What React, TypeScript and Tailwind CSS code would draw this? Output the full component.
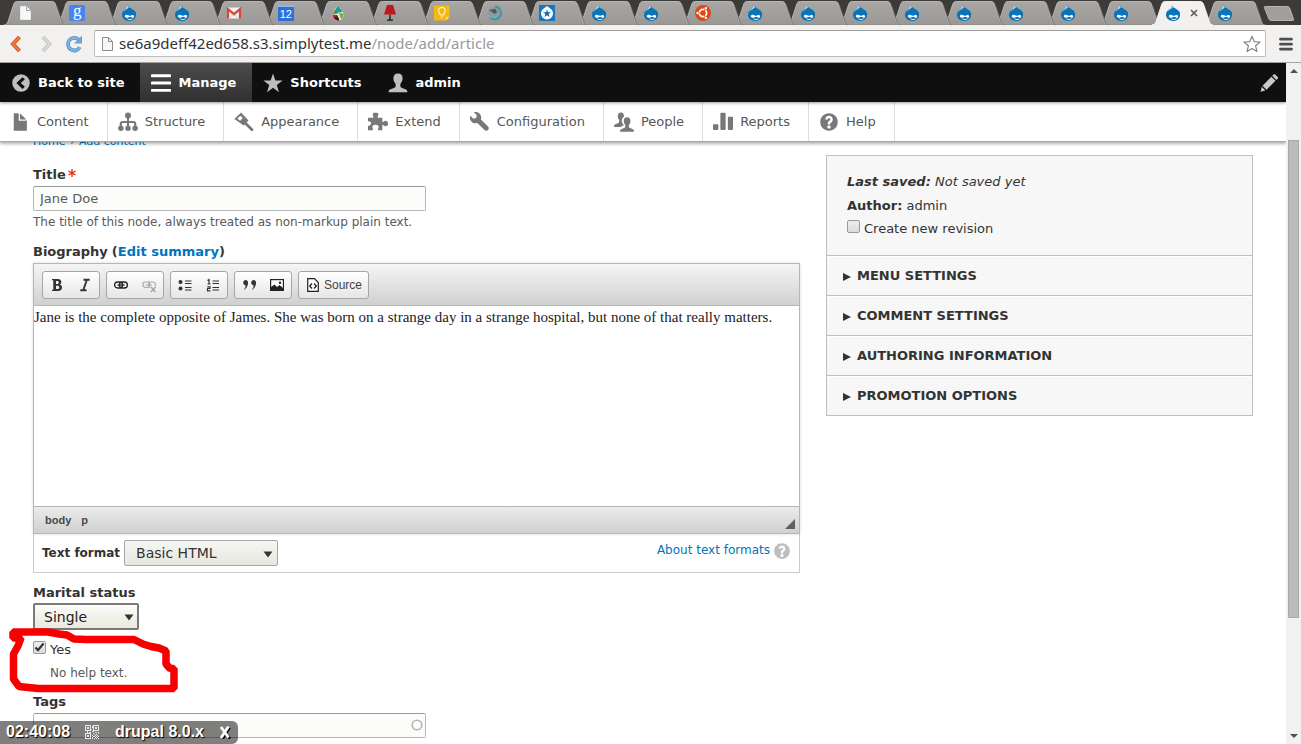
import React from 'react';

/* ---------- Favicons ---------- */

function Druplicon() {
  return (
    <svg viewBox="0 0 16 16" className="size-4" aria-hidden="true">
      <path d="M6.600.3C7.600 2 9 2.700 10.800 3.700C13.500 5.200 15 7.200 15 9.900C15 13.500 12 15.900 8.200 15.900S1 13.500 1 9.700C1 6.800 2.700 5.200 4.500 4C6 3 6.700 2 6.600.3Z" fill="#0b73b8" />
      <path d="M6.600.3C7 1.200 7.400 1.800 8 2.300C6.800 3.900 4.500 4.500 2.600 6.800C3 5 5.800 4 6.600.3Z" fill="#b9dcf2" />
      <path d="M12.800 5.100C14.500 6.600 15.200 8.500 14.900 10.700C14.500 8.600 13.800 7 12.800 5.100Z" fill="#0a568c" />
      <path d="M4.900 9.800C6.500 9.400 7.500 10.600 8.800 10.800C10 10.600 10.800 9.600 12.200 10C13.600 10.600 13.400 12.800 12.200 12.800C11 12.800 10.200 11.700 9.200 11.700C8 11.700 7.200 12.900 5.500 12.800C3.500 12.600 3.300 10.400 4.900 9.800Z" fill="#fff" />
      <path d="M6.500 13.800C8 14.900 10.200 14.800 11.400 13.700" fill="none" stroke="#fff" strokeWidth=".9" />
    </svg>
  );
}

function PageIcon({ light = false }: { light?: boolean }) {
  return (
    <svg viewBox="0 0 16 16" className="size-4" aria-hidden="true">
      <path d="M3.500 1.500H9.500L13.500 5.500V14.500H3.500Z" fill="#f7f7f7" stroke={light ? '#e9e9e9' : '#8c8c8c'} />
      <path d="M9.500 1.500V5.500H13.500" fill="none" stroke={light ? '#9c9c9c' : '#8c8c8c'} />
    </svg>
  );
}

function Gmail() {
  return (
    <svg viewBox="0 0 16 16" className="size-4" aria-hidden="true">
      <rect x="1" y="2.500" width="14" height="11" rx="1" fill="#f4f1f0" />
      <path d="M2 13.500V4.200L8 9.200L14 4.200V13.500" fill="none" stroke="#d8453a" strokeWidth="2.200" />
      <path d="M3.500 13L7 9.500M12.500 13L9 9.500" stroke="#c9c5c4" strokeWidth=".8" />
    </svg>
  );
}

function Parrot() {
  return (
    <svg viewBox="0 0 16 16" className="size-4" aria-hidden="true">
      <path d="M8 .5C11 4 13.500 7 13.500 10.200A5.500 5.500 0 0 1 2.500 10.200C2.500 7 5 4 8 .5Z" fill="#f3efe4" />
      <path d="M8 .5C10 3 11.600 5 12.500 7L6.500 8L5 5C6 3.500 7 2 8 .5Z" fill="#1d9c9a" />
      <path d="M5.200 4.800L8.300 8.500L3 9C3 7.500 4.200 6 5.200 4.800Z" fill="#3b9b3b" />
      <path d="M9 8L13.300 8.500C13.500 11 12.500 13 11 14.500Z" fill="#67b52f" />
      <path d="M2.500 9.500L7.500 10L9 15.500C5 15.800 2.500 13 2.500 9.500Z" fill="#c1272d" />
      <path d="M4 12L8 11.500L9.500 15.400C7 16 5 14.500 4 12Z" fill="#2a2422" />
    </svg>
  );
}

function Lamp() {
  return (
    <svg viewBox="0 0 16 16" className="size-4" aria-hidden="true">
      <path d="M5 0H11L14 9.500H2Z" fill="#c3161c" />
      <path d="M7.300 9.500H8.700V14.500H11V15.800H5V14.500H7.300Z" fill="#1d1d1d" />
    </svg>
  );
}

function Keep() {
  return (
    <svg viewBox="0 0 16 16" className="size-4" aria-hidden="true">
      <path d="M0 .5H15.500V12L12 15.500H0Z" fill="#f5b912" />
      <path d="M12 15.500V12H15.500Z" fill="#fbe08e" />
      <path d="M6.300 10C6.300 8.500 4.600 8 4.600 5.800A3.300 3.300 0 0 1 11.200 5.800C11.200 8 9.500 8.500 9.500 10ZM6.500 12H9.300" fill="none" stroke="#fff3cf" strokeWidth="1.200" />
    </svg>
  );
}

function Swirl() {
  return (
    <svg viewBox="0 0 16 16" className="size-4" aria-hidden="true">
      <circle cx="8" cy="8" r="6.500" fill="#8c989a" />
      <path d="M8 1.500A6.500 6.500 0 1 1 3 12.500" fill="none" stroke="#3d98a6" strokeWidth="1.800" />
      <path d="M1.500 5L8.500 4L10 7.500L7 9L5.500 7Z" fill="#4b575d" />
      <path d="M3 11C5 12.500 9 13 11 9.500" fill="none" stroke="#6fb4be" strokeWidth="1.300" />
    </svg>
  );
}

function StarDrop() {
  return (
    <svg viewBox="0 0 16 16" className="size-4" aria-hidden="true">
      <rect width="16" height="16" fill="#1577c2" />
      <path d="M8 1L12.500 4.500A6 6 0 1 1 3.500 4.500Z" fill="#fff" />
      <path d="M8 4.500L9 7.200H12L9.700 9L10.500 12L8 10.200L5.500 12L6.300 9L4 7.200H7Z" fill="#1468ab" />
    </svg>
  );
}

function Ubuntu() {
  return (
    <svg viewBox="0 0 16 16" className="size-4" aria-hidden="true">
      <circle cx="8" cy="8" r="8" fill="#dd4814" />
      <circle cx="8" cy="8" r="3.600" fill="none" stroke="#fff" strokeWidth="1.800" />
      <path d="M8 8L1.500 8M8 8L11.500 2M8 8L11.500 14" stroke="#dd4814" strokeWidth="1" />
      <circle cx="2.500" cy="8" r="1.200" fill="#fff" />
      <circle cx="10.900" cy="3.100" r="1.200" fill="#fff" />
      <circle cx="10.900" cy="12.900" r="1.200" fill="#fff" />
    </svg>
  );
}

function Google() {
  return (
    <span className="flex size-4 items-center justify-center rounded-xs bg-[#4684f0] pb-1 font-['Liberation_Serif',serif] text-[17px] leading-4 text-white">g</span>
  );
}

function Calendar() {
  return (
    <span className="flex size-4 items-center justify-center border-t-2 border-[#8eb4f5] bg-[#2f6fd8] font-['Liberation_Sans',sans-serif] text-[11px] leading-3 text-white">12</span>
  );
}

const drupal = <Druplicon />;
const tabs: React.ReactNode[] = [
  <PageIcon light />, <Google />, drupal, drupal, <Gmail />, <Calendar />, <Parrot />, <Lamp />,
  <Keep />, <Swirl />, <StarDrop />, drupal, drupal, <Ubuntu />, drupal, drupal,
  drupal, drupal, drupal, drupal, drupal, drupal, drupal, drupal,
];
const ACTIVE_TAB = 22;

function BrowserTab({ icon, active, order }: { icon: React.ReactNode; active: boolean; order: number }) {
  return (
    <div className="relative h-6 min-w-0 flex-1" style={{ zIndex: active ? tabs.length + 1 : order }}>
      <svg viewBox="0 0 62 24" className="absolute left-0 top-0 h-6 w-[62px]" aria-hidden="true">
        <path
          d="M0 24C3 23.500 3.500 22 4.200 20L9.500 4C10.300 1.500 11 .5 13.500 .5H47.500C50 .5 51 1.500 51.800 4L57.200 20C58 22.500 58.500 23.500 61 24Z"
          fill={active ? '#f2f1f0' : 'url(#tab-fill)'}
          stroke={active ? '#f2f1f0' : '#b7b6b3'}
          strokeWidth="1"
        />
        {!active && <path d="M52.500 4.500L57.800 20C58.500 22.500 59 23.500 61 24M0 24H61" fill="none" stroke="#6d6c68" strokeWidth=".8" />}
      </svg>
      <div className="relative flex h-6 items-center gap-[9px] pl-[13px]">
        <span className="shrink-0">{icon}</span>
        {active && (
          <button type="button" aria-label="Close tab" className="shrink-0">
            <svg viewBox="0 0 8 8" className="size-2" aria-hidden="true">
              <path d="M1 1L7 7M7 1L1 7" stroke="#5a5a5a" strokeWidth="1.600" />
            </svg>
          </button>
        )}
      </div>
    </div>
  );
}

function BrowserChrome() {
  return (
    <header className="shrink-0">
      <div className="flex h-[25px] bg-[#3c3b37] pl-1 pt-px">
        <svg className="absolute size-0" aria-hidden="true">
          <defs>
            <linearGradient id="tab-fill" x1="0" x2="0" y1="0" y2="1">
              <stop offset="0" stopColor="#a8a7a5" />
              <stop offset="1" stopColor="#999896" />
            </linearGradient>
          </defs>
        </svg>
        <div className="isolate flex min-w-0 flex-1">
          {tabs.map((icon, i) => (
            <BrowserTab key={i} icon={icon} active={i === ACTIVE_TAB} order={tabs.length - i} />
          ))}
        </div>
        <button type="button" aria-label="New tab" className="mt-1 h-4 w-[45px] pl-[7px]">
          <svg viewBox="0 0 32 15" className="h-[15px] w-8" aria-hidden="true">
            <path d="M2.500.5H23.500C26 .5 26.500 1.500 27 3L30.500 13C31 14.300 30.500 14.500 29.500 14.500H9C6.500 14.500 6 13.500 5.500 12L1.500 2C1 .8 1.500.5 2.500.5Z" fill="#a09f9c" stroke="#b7b6b3" />
          </svg>
        </button>
      </div>
      <div className="flex h-[38px] items-center border-b border-[#a3a3a3] bg-[#f2f1f0] px-2">
        <button type="button" aria-label="Back" className="mr-3">
          <svg viewBox="0 0 16 20" className="h-5 w-4" aria-hidden="true">
            <path d="M11.500 3L5 10L11.500 17" fill="none" stroke="#c9501f" strokeWidth="4" />
            <path d="M11.500 3L5 10L11.500 17" fill="none" stroke="#ef7a3c" strokeWidth="2.400" />
          </svg>
        </button>
        <button type="button" aria-label="Forward" className="mr-3">
          <svg viewBox="0 0 16 20" className="h-5 w-4" aria-hidden="true">
            <path d="M7 3L13.500 10L7 17" fill="none" stroke="#bdbdbd" strokeWidth="3.600" />
            <path d="M7 3L13.500 10L7 17" fill="none" stroke="#d9d9d9" strokeWidth="2.200" />
          </svg>
        </button>
        <button type="button" aria-label="Reload" className="mr-2.5">
          <svg viewBox="0 0 20 20" className="size-5" aria-hidden="true">
            <path d="M15.800 13.200A6.300 6.300 0 1 1 14.500 5.500" fill="none" stroke="#5b93c9" strokeWidth="3.800" />
            <path d="M15.800 13.200A6.300 6.300 0 1 1 14.500 5.500" fill="none" stroke="#84b3e0" strokeWidth="2" />
            <path d="M18 1.500V9.500H10Z" fill="#6ea2d6" />
          </svg>
        </button>
        <div className="flex h-[27px] min-w-0 flex-1 items-center rounded-xs border border-[#bdbcbb] border-t-[#9f9e9d] bg-white px-1">
          <PageIcon />
          <a href="#address" aria-label="Page address" className="ml-1 min-w-0 flex-1 truncate pb-0.5 font-['Noto_Sans',sans-serif] text-[15px] leading-[22px] text-[#333]">
            se6a9deff42ed658.s3.simplytest.me<span className="text-[#999]">/node/add/article</span>
          </a>
          <button type="button" aria-label="Bookmark this page">
            <svg viewBox="0 0 18 18" className="size-[18px]" aria-hidden="true">
              <path d="M9 1.200L11.200 6.600L17 7L12.600 10.800L14 16.500L9 13.400L4 16.500L5.400 10.800L1 7L6.800 6.600Z" fill="#fff" stroke="#858585" strokeWidth="1.200" strokeLinejoin="round" />
            </svg>
          </button>
        </div>
        <button type="button" aria-label="Menu" className="ml-[13px]">
          <svg viewBox="0 0 14 14" className="size-3.5" aria-hidden="true">
            <path d="M1.500 2.200H12.500M1.500 7.200H12.500M1.500 12.200H12.500" stroke="#4f4f4f" strokeWidth="2.800" strokeLinecap="round" />
          </svg>
        </button>
      </div>
    </header>
  );
}

/* ---------- Admin toolbar ---------- */

function Glyph({ children }: { children: React.ReactNode }) {
  return (
    <svg viewBox="0 0 16 16" className="size-5 shrink-0" fill="currentColor" aria-hidden="true">
      {children}
    </svg>
  );
}

const barItems = [
  { label: 'Back to site', icon: <path fillRule="evenodd" d="M8 1A7 7 0 1 0 8 15A7 7 0 0 0 8 1ZM9.200 3.300L11.100 5L7.800 8L11.100 11L9.200 12.700L4.300 8Z" /> },
  { label: 'Manage', icon: <path d="M.7 1H15.300Q16 1 16 1.700V2.700Q16 3.300 15.300 3.300H.7Q0 3.300 0 2.700V1.700Q0 1 .7 1ZM.7 6.800H15.300Q16 6.800 16 7.500V8.500Q16 9.200 15.300 9.200H.7Q0 9.200 0 8.500V7.500Q0 6.800.7 6.800ZM.7 12.700H15.300Q16 12.700 16 13.300V14.300Q16 15 15.300 15H.7Q0 15 0 14.300V13.300Q0 12.700.7 12.700Z" /> },
  { label: 'Shortcuts', icon: <path d="M8 .3L9.900 5.900L15.700 6L11 9.500L12.800 15.300L8 11.800L3.200 15.300L5 9.500L.3 6L6.100 5.900Z" /> },
  { label: 'admin', icon: <path d="M8 .3C5.600.3 4.300 1.900 4.300 4.200C4.300 6.300 5.200 7.400 5.900 8.400C6.400 9.500 6.300 11.200 5.200 11.800L1.500 13.100C.8 13.500.5 14 .5 15.300H15.500C15.500 14 15.200 13.500 14.500 13.100L10.800 11.800C9.700 11.200 9.600 9.500 10.100 8.400C10.800 7.400 11.700 6.300 11.700 4.200C11.700 1.900 10.400.3 8 .3Z" /> },
];

function HelpPath() {
  return (
    <path d="M8.002 1c-3.868 0-7.002 3.134-7.002 7s3.134 7 7.002 7c3.865 0 7-3.134 7-7s-3.135-7-7-7zm3 5c0 .551-.16 1.085-.477 1.586l-.158.22c-.07.093-.189.241-.361.393-.168.148-.35.299-.545.447l-.203.189-.141.129-.096.17-.021.235v.63h-2.001v-.704c.026-.396.078-.73.204-.999.125-.269.271-.498.439-.688l.225-.21-.01-.015.176-.14.137-.128c.186-.139.357-.277.516-.417l.148-.18c.098-.152.168-.323.168-.518 0-.552-.447-1-1-1s-1.002.448-1.002 1h-2c0-1.657 1.343-3 3.002-3 1.656 0 3 1.343 3 3zm-1.750 6.619c0 .344-.281.625-.625.625h-1.250c-.345 0-.626-.281-.626-.625v-1.238c0-.344.281-.625.626-.625h1.250c.344 0 .625.281.625.625v1.238z" />
  );
}

const trayItems = [
  { label: 'Content', icon: <path d="M12.500 7H7.500A.5.5 0 0 1 7 6.500V1.500A.5.5 0 0 0 6.500 1H3.500A.5.5 0 0 0 3 1.500V14.500A.5.5 0 0 0 3.500 15H13A.5.5 0 0 0 13.500 14.500V7.500A.5.5 0 0 0 12.500 7ZM8.500 6H12.500C12.900 6 12.900 5.800 12.650 5.650L8.350 1.350C8.100 1.100 8 1.200 8 1.500V5.500A.5.5 0 0 0 8.500 6Z" /> },
  {
    label: 'Structure',
    icon: (
      <>
        <path d="M2.200 12V9.600Q2.200 8 3.800 8H12.200Q13.800 8 13.800 9.600V12M8 3V12" fill="none" stroke="currentColor" strokeWidth="1.700" />
        <circle cx="8" cy="2.700" r="2.400" />
        <circle cx="2.300" cy="12.900" r="2.200" />
        <circle cx="8" cy="12.900" r="2.200" />
        <circle cx="13.700" cy="12.900" r="2.200" />
      </>
    ),
  },
  {
    label: 'Appearance',
    icon: (
      <>
        <path fillRule="evenodd" d="M5.600.3L11.600 6.800L7.800 10.800L.3 5.600ZM5 3L2.700 5.400L4.900 6.900L7 4.800Z" />
        <path d="M9.200 9L14.400 14.200" stroke="currentColor" strokeWidth="2.200" strokeLinecap="round" />
      </>
    ),
  },
  { label: 'Extend', icon: <path d="M0 4.500H4.300C4.500 3.500 3.800 3 3.800 1.800C3.800.8 4.500.5 6 .5S8.300.8 8.300 1.800C8.300 3 7.500 3.500 7.700 4.500H11.500V8C12.600 8.200 12.800 7 14.100 7C15.300 7 16 7.800 16 9.200S15.300 11.400 14.100 11.400C12.800 11.400 12.600 10.300 11.500 10.500V14.500H8C7.800 13.500 8.500 13 8.500 12C8.500 10.800 7.500 10.200 6 10.200S3.500 10.800 3.500 12C3.500 13 4.200 13.500 4 14.500H0V11C1 11.200 1.300 10.700 1.900 10.200C2.600 9.500 2.600 8.500 1.900 7.800C1.300 7.300 1 7.200 0 7.400Z" /> },
  { label: 'Configuration', icon: <path d="M14.416 11.586L8.750 5.921C8.900 5.472 9.002 5 9.002 4.500C9.002 2.015 6.986 0 4.500 0C3.995 0 3.519.102 3.066.255L5.497 2.686L4.909 4.882L2.713 5.470L.268 3.025C.106 3.489 0 3.981 0 4.500C0 6.986 2.014 9 4.500 9C5 9 5.472 8.898 5.921 8.749L11.588 14.414C12.369 15.195 13.635 15.195 14.416 14.414S15.197 12.367 14.416 11.586Z" /> },
  {
    label: 'People',
    icon: (
      <>
        <path d="M5.600.3C3.900.3 3 1.500 3 3.200C3 4.700 3.500 5.300 4 6.200C4.300 7.200 4.300 8.400 3.500 8.800L1 9.800C.3 10.200 0 10.600 0 12H5.500C6.200 11 7.500 10.800 8 10.500C7 9.500 6.200 8.600 6.200 6.700C6.200 5.300 7 4.200 8 3.700C8.100 1.500 7.200.3 5.600.3Z" />
        <path d="M10.500 4.200C8.700 4.200 7.800 5.400 7.800 7.100C7.800 8.600 8.400 9.300 8.900 10.200C9.200 11.100 9.200 12.200 8.400 12.600L5.800 13.700C5 14.100 4.800 14.500 4.800 15.800H16C16 14.500 15.800 14.100 15.100 13.700L12.500 12.600C11.700 12.200 11.700 11.100 12.100 10.200C12.600 9.300 13.200 8.600 13.200 7.100C13.200 5.400 12.200 4.200 10.500 4.200Z" />
      </>
    ),
  },
  { label: 'Reports', icon: <path d="M.7 9.700H3.600Q4.300 9.700 4.300 10.400V13.600Q4.300 14.300 3.600 14.300H.7Q0 14.300 0 13.600V10.400Q0 9.700.7 9.700ZM6.600.5H9.400Q10.100.5 10.100 1.200V13.600Q10.100 14.300 9.400 14.300H6.600Q5.900 14.300 5.900 13.600V1.200Q5.900.5 6.600.5ZM12.600 3.700H15.300Q16 3.700 16 4.400V13.600Q16 14.300 15.300 14.300H12.600Q11.900 14.300 11.900 13.600V4.400Q11.900 3.700 12.600 3.700Z" /> },
  { label: 'Help', icon: <HelpPath /> },
];

function AdminToolbar() {
  return (
    <div className="relative z-10 shrink-0 text-[13px]">
      <nav aria-label="Toolbar" className="relative z-10 flex h-[39px] items-stretch bg-[#0f0f0f] font-bold text-white shadow-[0_1px_3px_rgba(0,0,0,0.4)]">
        {barItems.map(({ label, icon }) => (
          <a
            key={label}
            href="#toolbar"
            className={
              label === 'Manage'
                ? 'flex items-center gap-[7px] bg-linear-to-b from-[#4c4c4c] to-[#303030] pl-[11px] pr-4'
                : 'flex items-center gap-[7px] pl-[11px] pr-4'
            }
          >
            <span className={label === 'Manage' ? 'text-white' : 'text-[#bebebe]'}>
              <Glyph>{icon}</Glyph>
            </span>
            {label}
          </a>
        ))}
        <button type="button" aria-label="Edit" className="ml-auto mr-[7px] text-[#c8c8c8]">
          <Glyph>
            <path d="M12.900 1.200L15 3.200Q15.500 3.900 14.900 4.500L13.900 5.500L10.600 2.200L11.600 1.200Q12.300.7 12.900 1.200ZM9.900 2.900L13.200 6.200L6 13.300L2.800 10.100ZM2.200 11L5.100 13.900L1.300 14.900Z" />
          </Glyph>
        </button>
      </nav>
      <nav aria-label="Administration" className="flex h-10 items-stretch border-b border-[#a9a9a9] bg-white text-[#565656] shadow-[0_2px_3px_rgba(0,0,0,0.3)]">
        {trayItems.map(({ label, icon }) => (
          <a key={label} href="#administration" className="flex items-center gap-[7px] border-r border-[#ddd] pl-2.5 pr-[18px]">
            <span className="text-[#787878]">
              <Glyph>{icon}</Glyph>
            </span>
            {label}
          </a>
        ))}
      </nav>
    </div>
  );
}

/* ---------- Node form ---------- */

const labelClass = 'flex h-5 items-center text-[13px] font-bold text-[#333]';
const inputClass = 'block h-[25px] w-[393px] max-w-full rounded-xs border border-[#b8b8b8] border-t-[#999] bg-[#fcfcfa] px-1.5 text-[13px] text-[#595959]';

function Caret() {
  return (
    <svg viewBox="0 0 10 7" className="pointer-events-none absolute right-[5px] top-[11px] h-[7px] w-2.5" aria-hidden="true">
      <path d="M.5.5H9.500L5 6.500Z" fill="#333" />
    </svg>
  );
}

function EditorButton({ label, children }: { label: string; children: React.ReactNode }) {
  return (
    <button type="button" aria-label={label} className="flex h-[26px] w-7 items-center justify-center">
      <svg viewBox="0 0 16 16" className="size-4" aria-hidden="true">{children}</svg>
    </button>
  );
}

function EditorGroup({ children }: { children: React.ReactNode }) {
  return (
    <div className="flex h-7 items-center rounded-[3px] border border-[#a6a6a6] bg-linear-to-b from-white to-[#e6e6e6]">{children}</div>
  );
}

function EditorToolbar() {
  return (
    <div className="flex h-[42px] items-center gap-1.5 border-b border-[#b6b6b6] bg-linear-to-b from-[#f5f5f5] to-[#cfd1cf] px-2">
      <EditorGroup>
        <EditorButton label="Bold">
          <path fillRule="evenodd" d="M3 2H8.800C11.300 2 12.300 3.400 12.300 4.900C12.300 6.200 11.600 7.200 10.500 7.600C12 7.900 13 9 13 10.500C13 12.700 11.500 14 9 14H3V12.700H4.300V3.300H3ZM7 3.900V6.900H8.200C9.200 6.900 9.700 6.300 9.700 5.400S9.200 3.900 8.200 3.900ZM7 8.700V12.100H8.500C9.700 12.100 10.300 11.500 10.300 10.400S9.700 8.700 8.500 8.700Z" fill="#333" />
        </EditorButton>
        <EditorButton label="Italic">
          <path d="M6.500 2.800H12.700M3.300 13.200H9.500M9.800 3L6.300 13" fill="none" stroke="#333" strokeWidth="1.900" />
        </EditorButton>
      </EditorGroup>
      <EditorGroup>
        <EditorButton label="Link">
          <rect x="1.600" y="5" width="8" height="6" rx="3" fill="none" stroke="#222" strokeWidth="1.300" />
          <rect x="6.400" y="5" width="8" height="6" rx="3" fill="none" stroke="#222" strokeWidth="1.300" />
          <path d="M4.500 8H11.500" stroke="#222" strokeWidth="1.300" />
        </EditorButton>
        <EditorButton label="Unlink">
          <path d="M8.500 10.500H4.500A2.500 2.500 0 0 1 4.500 5H12A2.500 2.500 0 0 1 14 9M4.500 8H11M7 5.200C9.500 5.500 9.500 10 7.500 10.500M9 5.200C7 6 7 9 8.500 10" fill="none" stroke="#a9a9a9" strokeWidth="1.200" />
          <path d="M10 10L14.500 15M14.500 10L10 15" stroke="#a3a3a3" strokeWidth="1.400" />
        </EditorButton>
      </EditorGroup>
      <EditorGroup>
        <EditorButton label="Bulleted list">
          <circle cx="3.500" cy="5" r="2" fill="#333" />
          <circle cx="3.500" cy="11.500" r="2" fill="#333" />
          <path d="M8 4H14.500M8 6.500H14.500M8 10.500H14.500M8 13H14.500" stroke="#333" strokeWidth="1.200" />
        </EditorButton>
        <EditorButton label="Numbered list">
          <path d="M2.500 3.500L4 2.500V7M2.500 7H5.500M2.300 9.800H5V11.500H2.500V13.800H5.500" fill="none" stroke="#333" strokeWidth="1.200" />
          <path d="M7.500 4H14M7.500 6.500H14M7.500 10.500H14M7.500 13H14" stroke="#333" strokeWidth="1.200" />
        </EditorButton>
      </EditorGroup>
      <EditorGroup>
        <EditorButton label="Block quote">
          <path d="M4.200 3A2.600 2.600 0 0 1 7 6C7 9 5.300 12 2.300 13.500C4 11.500 4.600 10 4.500 8.300A2.700 2.700 0 0 1 4.200 3ZM12.200 3A2.600 2.600 0 0 1 15 6C15 9 13.300 12 10.300 13.500C12 11.500 12.600 10 12.500 8.300A2.700 2.700 0 0 1 12.200 3Z" fill="#333" />
        </EditorButton>
        <EditorButton label="Image">
          <rect x="1.600" y="2.600" width="12.800" height="10.800" fill="#fff" stroke="#222" strokeWidth="1.200" />
          <path d="M2 13V10L5.500 7.500L8 10L10.500 8L14 11V13Z" fill="#222" />
          <circle cx="11" cy="5.800" r="1.200" fill="#222" />
        </EditorButton>
      </EditorGroup>
      <EditorGroup>
        <button type="button" className="flex h-[26px] items-center gap-[3px] px-1.5 font-['Liberation_Sans',sans-serif] text-xs text-[#444]">
          <svg viewBox="0 0 16 16" className="size-4" aria-hidden="true">
            <path d="M2.700 1.700H9.500L13.300 5.500V14.300H2.700Z" fill="#fff" stroke="#222" strokeWidth="1.200" />
            <path d="M7 6.500L4.700 9L7 11.500M9 6.500L11.300 9L9 11.500" fill="none" stroke="#222" strokeWidth="1.300" />
          </svg>
          Source
        </button>
      </EditorGroup>
    </div>
  );
}

function CheckBox({ id, checked = false }: { id: string; checked?: boolean }) {
  return (
    <span className="relative block size-[13px] shrink-0">
      <input id={id} type="checkbox" defaultChecked={checked} className="peer block size-[13px] appearance-none rounded-xs border border-[#999] bg-linear-to-b from-[#eee] to-[#dcdcdc]" />
      <svg viewBox="0 0 13 13" className="pointer-events-none absolute inset-0 hidden size-[13px] peer-checked:block" aria-hidden="true">
        <path d="M2.500 6.500L5 9.200L10.500 2.500" fill="none" stroke="#333" strokeWidth="2.200" />
      </svg>
    </span>
  );
}

function NodeForm() {
  return (
    <form className="min-w-0" onSubmit={(e) => e.preventDefault()}>
      <nav aria-label="Breadcrumb" className="-mt-2 h-4 text-[11px] leading-4 text-[#0074bd]">
        <a href="#home">Home</a>
        <span className="px-px"> › </span>
        <a href="#add">Add content</a>
      </nav>

      <label htmlFor="title" className={`${labelClass} mt-[15px] gap-0.5`}>
        Title
        <svg viewBox="0 0 8 8" className="mb-1 size-2" aria-hidden="true">
          <path d="M4 0V8M.5 2L7.500 6M7.500 2L.5 6" stroke="#e62600" strokeWidth="1.300" />
        </svg>
      </label>
      <input id="title" type="text" defaultValue="Jane Doe" className={`${inputClass} mt-px`} />
      <p className="mt-px h-5 text-xs leading-5 text-[#595959]">The title of this node, always treated as non-markup plain text.</p>

      <div className={`${labelClass} mt-2.5`}>
        <label htmlFor="biography">Biography</label>
        <span className="pl-1">(</span>
        <button type="button" className="font-bold text-[#0074bd]">Edit summary</button>)
      </div>
      <div className="mt-px border border-[#ccc]">
        <div className="-mx-px -mt-px border border-[#b6b6b6] shadow-[0_0_3px_rgba(0,0,0,0.15)]">
          <EditorToolbar />
          <textarea
            id="biography"
            className="block h-[200px] w-full resize-none overflow-hidden bg-white font-['Liberation_Serif',serif] text-[15px] leading-[22px] text-[#222] outline-none"
            defaultValue="Jane is the complete opposite of James. She was born on a strange day in a strange hospital, but none of that really matters."
          />
          <div className="flex h-[27px] items-center gap-2.5 border-t border-[#b6b6b6] bg-linear-to-b from-[#ebebeb] to-[#cfd1cf] pl-[11px] pr-1 font-['Liberation_Sans',sans-serif] text-[11px] font-bold text-[#484848]">
            <span>body</span>
            <span>p</span>
            <svg viewBox="0 0 10 10" className="ml-auto mt-2 size-2.5" aria-hidden="true">
              <path d="M10 0V10H0Z" fill="#606060" />
            </svg>
          </div>
        </div>
        <div className="flex h-[38px] items-center px-2">
          <label htmlFor="format" className="text-xs font-bold text-[#333]">Text format</label>
          <div className="relative ml-1">
            <select id="format" className="block h-[26px] w-[154px] appearance-none rounded-xs border border-[#a6a6a6] bg-linear-to-b from-[#f6f6f3] to-[#e7e7df] pl-[11px] text-sm text-[#333]">
              <option>Basic HTML</option>
            </select>
            <Caret />
          </div>
          <a href="#formats" className="mb-1.5 ml-auto flex items-center gap-[3px] text-xs text-[#0074bd]">
            About text formats
            <svg viewBox="0 0 16 16" className="mt-0.5 size-[18px]" fill="#bebebe" aria-hidden="true">
              <HelpPath />
            </svg>
          </a>
        </div>
      </div>

      <label htmlFor="marital" className={`${labelClass} mt-2.5`}>Marital status</label>
      <div className="relative w-[106px]">
        <select id="marital" className="block h-[27px] w-full appearance-none rounded-xs border-2 border-[#7a7a7a] bg-linear-to-b from-[#fcfcfa] to-[#e9e9dd] pl-[9px] text-sm text-[#222]">
          <option>Single</option>
        </select>
        <Caret />
      </div>

      <div className="relative mt-[9px]">
        <div className="flex h-5 gap-1 pt-0.5">
          <CheckBox id="status" checked />
          <label htmlFor="status" className="text-[13px] leading-[18px] text-[#333]">Yes</label>
        </div>
        <p className="mt-1 h-5 pl-[17px] text-xs leading-5 text-[#595959]">No help text.</p>
        <svg viewBox="0 0 168 65" className="pointer-events-none absolute -left-[23px] -top-[11px] h-[65px] w-[168px] overflow-visible" fill="none" stroke="#f80000" strokeWidth="7.500" strokeLinejoin="bevel" aria-hidden="true">
          <path d="M3 4H38L49 6L57 7L64 11L76 11.500H124L133 16L141 18.500L149 20L156 23V36L160 40.500H164V60.500H28L9 58.500L3.500 51V26L8 18L11 10H3Z" />
        </svg>
      </div>

      <label htmlFor="tags" className={`${labelClass} mt-[9px]`}>Tags</label>
      <div className="relative mt-px w-[393px] max-w-full">
        <input id="tags" type="text" className={inputClass} />
        <svg viewBox="0 0 12 12" className="absolute right-[3px] top-1.5 size-3" aria-hidden="true">
          <circle cx="6" cy="6" r="4.800" fill="#fcfcfa" stroke="#b5b5b5" strokeWidth="1.600" />
        </svg>
      </div>
    </form>
  );
}

const panels = ['Menu settings', 'Comment settings', 'Authoring information', 'Promotion options'];

function Sidebar() {
  return (
    <aside className="mt-[13px] self-start border border-[#bfbfbf] bg-[#f7f7f7] text-[13px] text-[#333]">
      <div className="px-5 py-3.5">
        <p className="italic leading-6"><strong>Last saved:</strong> Not saved yet</p>
        <p className="leading-6"><strong>Author:</strong> admin</p>
        <div className="flex gap-1 pb-px">
          <span className="pt-0.5"><CheckBox id="revision" /></span>
          <label htmlFor="revision" className="leading-[22px]">Create new revision</label>
        </div>
      </div>
      {panels.map((title) => (
        <details key={title} className="border-t border-[#bfbfbf] shadow-[inset_0_1px_0_#fff]">
          <summary className="flex h-[39px] list-none items-center gap-1.5 pl-4 font-bold uppercase">
            <svg viewBox="0 0 8 8" className="mt-0.5 size-2" aria-hidden="true">
              <path d="M0 0L8 4L0 8Z" fill="#333" />
            </svg>
            {title}
          </summary>
        </details>
      ))}
    </aside>
  );
}

function RecorderBadge() {
  return (
    <div className="absolute bottom-0 left-0 z-20 flex h-[23px] w-[238px] items-center rounded-r-md bg-black/50 pb-0.5 pl-1.5 font-['Liberation_Sans',sans-serif] text-base font-bold text-white [text-shadow:1px_1px_1px_#000]">
      <span>02:40:08</span>
      <svg viewBox="0 0 14 14" className="ml-[15px] size-3.5" fill="#e8e8e8" shapeRendering="crispEdges" aria-hidden="true">
        <path fillRule="evenodd" d="M0 0H6V6H0ZM1 1V5H5V1ZM8 0H14V6H8ZM9 1V5H13V1ZM0 8H6V14H0ZM1 9V13H5V9Z" />
        <path d="M2 2H4V4H2ZM10 2H12V4H10ZM2 10H4V12H2ZM7 1H8V3H7ZM6 4H7V5H6ZM7 6H9V7H7ZM2 6H3V8H2ZM4 7H6V8H4ZM10 7H12V8H10ZM13 7H14V9H13ZM8 8H9V9H8ZM9 9H10V10H9ZM11 9H12V10H11ZM7 10H8V11H7ZM10 10H11V11H10ZM12 10H13V11H12ZM8 11H10V12H8ZM11 11H12V12H11ZM13 11H14V12H13ZM7 12H8V14H7ZM10 12H11V13H10ZM12 12H13V13H12ZM9 13H10V14H9ZM11 13H12V14H11ZM13 13H14V14H13Z" />
      </svg>
      <span className="ml-4">drupal 8.0.x</span>
      <button type="button" aria-label="Dismiss" className="ml-[15px]">
        <svg viewBox="0 0 12 14" className="h-3.5 w-3" aria-hidden="true">
          <path d="M3 3.500L11 13.500M10.500 2.500L3.500 14" stroke="#000" strokeWidth="2.600" />
          <path d="M2 2L9.500 12.500M9.500 1.500L2 13" stroke="#fff" strokeWidth="2.800" />
        </svg>
      </button>
    </div>
  );
}

export default function App() {
  return (
    <div className="relative flex h-screen flex-col overflow-hidden bg-white font-['DejaVu_Sans',sans-serif]">
      <BrowserChrome />
      <div className="flex min-h-0 flex-1">
        <div className="flex min-w-0 flex-1 flex-col overflow-hidden">
          <AdminToolbar />
          <main className="grid min-h-0 flex-1 grid-cols-[767fr_427fr] gap-[26px] px-[33px]">
            <NodeForm />
            <Sidebar />
          </main>
        </div>
        <div className="flex w-[15px] shrink-0 flex-col items-center bg-[#f1f1f1]" aria-hidden="true">
          <svg viewBox="0 0 8 4" className="mt-1.5 h-1 w-2"><path d="M0 4L4 0L8 4Z" fill="#505050" /></svg>
          <div className="flex w-full flex-1 flex-col items-center pb-1 pt-[67px]">
            <div className="h-[81%] w-[11px] border border-[#a8a8a8] bg-[#bcbcbc]" />
          </div>
          <svg viewBox="0 0 8 4" className="mb-1.5 h-1 w-2"><path d="M0 0L4 4L8 0Z" fill="#505050" /></svg>
        </div>
      </div>
      <RecorderBadge />
    </div>
  );
}
